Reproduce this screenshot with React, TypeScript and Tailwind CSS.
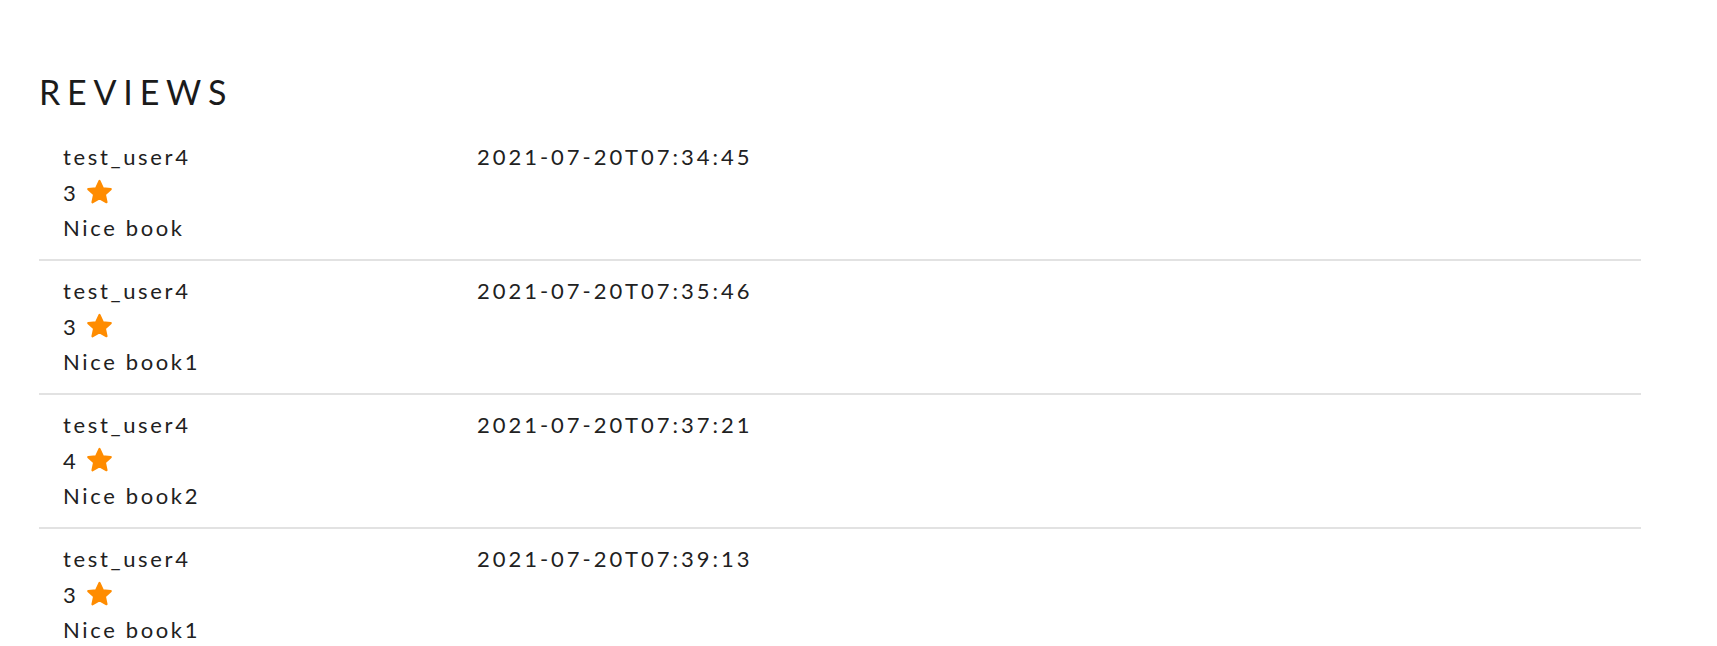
import React from 'react';

interface Review {
  user: string;
  date: string;
  rating: number;
  comment: string;
}

const reviews: Review[] = [
  { user: 'test_user4', date: '2021-07-20T07:34:45', rating: 3, comment: 'Nice book' },
  { user: 'test_user4', date: '2021-07-20T07:35:46', rating: 3, comment: 'Nice book1' },
  { user: 'test_user4', date: '2021-07-20T07:37:21', rating: 4, comment: 'Nice book2' },
  { user: 'test_user4', date: '2021-07-20T07:39:13', rating: 3, comment: 'Nice book1' },
];

function Star() {
  return (
    <svg width="27" height="26" viewBox="0 0 25 24" className="ml-[8px] inline-block">
      <polygon
        points="12.5,1.8 15.6,8.5 22.9,9.3 17.5,14.3 19,21.5 12.5,17.9 6,21.5 7.5,14.3 2.1,9.3 9.4,8.5"
        fill="#ff8c00"
        stroke="#ff8c00"
        strokeWidth="2"
        strokeLinejoin="round"
      />
    </svg>
  );
}

export default function App() {
  return (
    <div
      className="bg-white min-h-[646px] pt-[75px] pl-[39px] pr-[76px] text-[#212121]"
      style={{ fontFamily: 'Lato, "Open Sans", sans-serif' }}
    >
      <h2 className="text-[34px] leading-none tracking-[0.2em] text-[#1b1b1b] mb-[18px]">REVIEWS</h2>
      <div>
        {reviews.map((r, i) => (
          <div
            key={i}
            className="grid grid-cols-[414px_1fr] pl-[24px] pt-[12px] pb-[13.5px] border-b-2 border-[#e2e2e2] text-[22px] leading-[35.5px] tracking-[0.12em]"
          >
            <div>
              <div>{r.user}</div>
              <div className="flex items-center">
                <span>{r.rating}</span>
                <Star />
              </div>
              <div>{r.comment}</div>
            </div>
            <div className="tracking-[0.135em]">{r.date}</div>
          </div>
        ))}
      </div>
    </div>
  );
}
